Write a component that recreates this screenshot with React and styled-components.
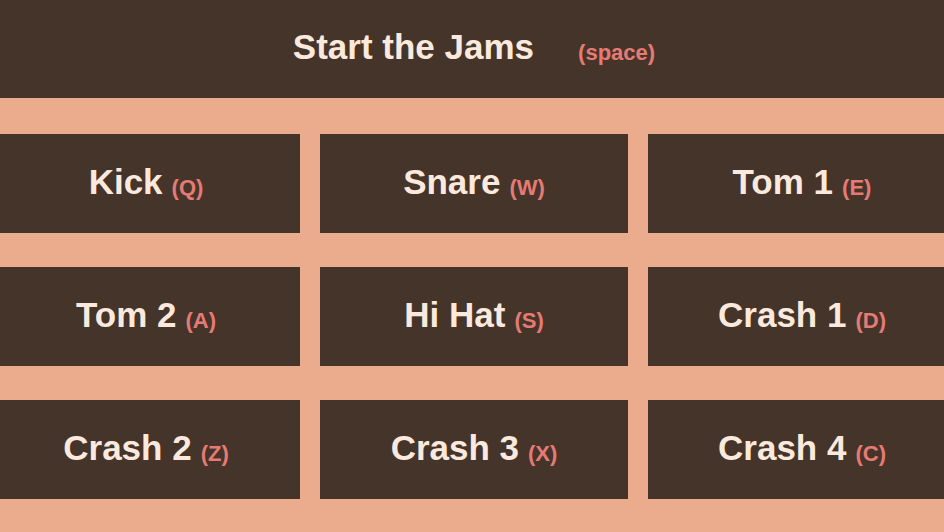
import React from 'react'
import styled, { createGlobalStyle } from 'styled-components'

const pads = [
    { id: 'Q', name: 'Kick' },
    { id: 'W', name: 'Snare' },
    { id: 'E', name: 'Tom 1' },
    { id: 'A', name: 'Tom 2' },
    { id: 'S', name: 'Hi Hat' },
    { id: 'D', name: 'Crash 1' },
    { id: 'Z', name: 'Crash 2' },
    { id: 'X', name: 'Crash 3' },
    { id: 'C', name: 'Crash 4' },
]

const GlobalStyle = createGlobalStyle`
    html, body {
        margin: 0;
        padding: 0;
        background-color: #eaac8c;
        overflow: hidden;
        font-family: "Liberation Sans", Arial, sans-serif;
    }
`

const App = () => {
    return (
        <Wrapper>
            <GlobalStyle />
            <Header>
                <Title>Start the Jams</Title>
                <Key $big>(space)</Key>
            </Header>
            <Grid>
                {pads.map((p) => {
                    const { id, name } = p
                    return (
                        <Pad key={id}>
                            <Label>{name}</Label>
                            <Key>({id})</Key>
                        </Pad>
                    )
                })}
            </Grid>
        </Wrapper>
    )
}

const Wrapper = styled.main`
    width: 964px;
    margin-left: -8px;
    min-height: 532px;
    background-color: #eaac8c;
`

const Header = styled.header`
    height: 98px;
    background-color: #45342a;
    display: flex;
    justify-content: center;
    align-items: flex-end;
    padding-bottom: 31px;
    box-sizing: border-box;
    gap: 44px;
`

const Title = styled.h1`
    margin: 0;
    font-size: 35px;
    font-weight: 700;
    color: #fbe9dd;
    line-height: 1.15;
`

const Key = styled.span`
    font-size: 22px;
    font-weight: 700;
    color: #e57b74;
    line-height: 1.15;
    margin-bottom: 2px;
    margin-left: ${(p) => (p.$big ? '0' : '9px')};
`

const Grid = styled.section`
    margin-top: 36px;
    display: grid;
    grid-template-columns: repeat(3, 308px);
    grid-auto-rows: 99px;
    column-gap: 20px;
    row-gap: 34px;
`

const Pad = styled.button`
    border: 0;
    outline: 0;
    padding: 0 0 31px;
    background-color: #45342a;
    display: flex;
    justify-content: center;
    align-items: flex-end;
    font-family: inherit;
    cursor: pointer;

    &:hover {
        background-color: #4f3c31;
    }
`

const Label = styled.span`
    font-size: 35px;
    font-weight: 700;
    color: #fbe9dd;
    line-height: 1.15;
`

export default App
